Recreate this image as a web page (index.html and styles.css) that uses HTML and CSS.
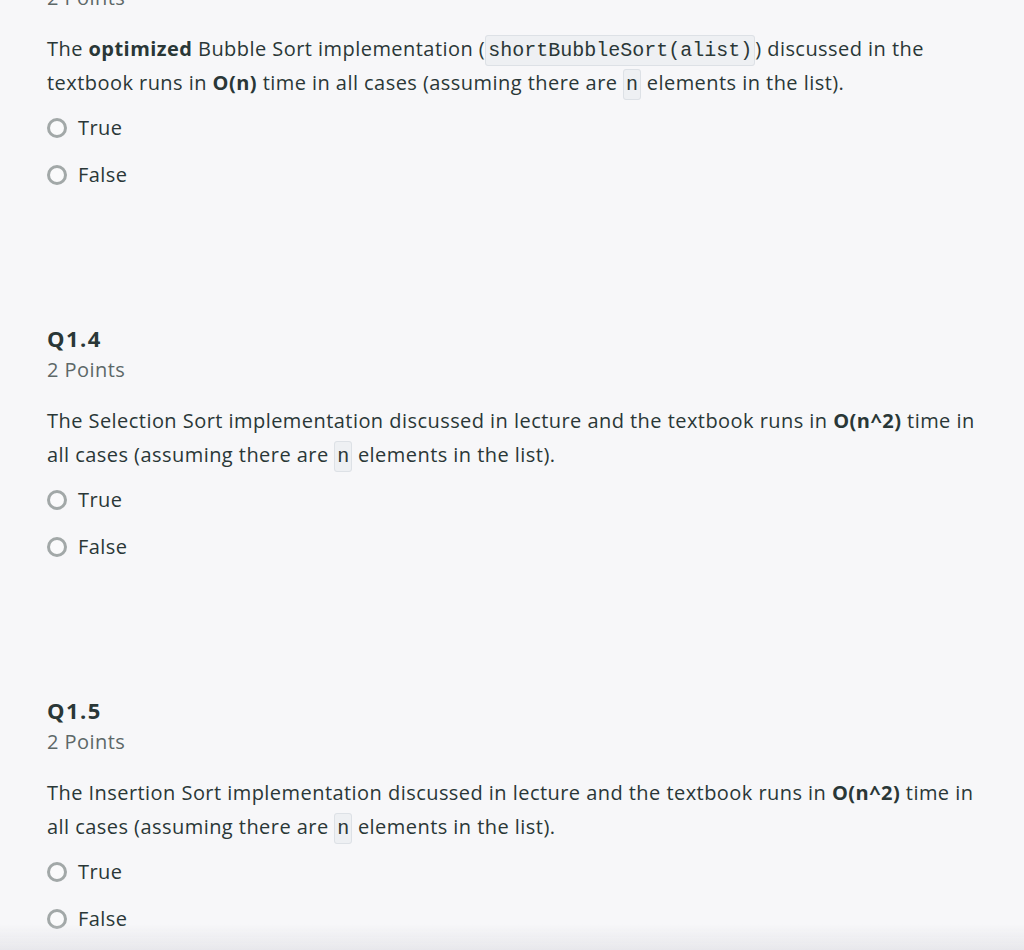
FILE: index.html
```html
<!DOCTYPE html>
<html lang="en">
<head>
<meta charset="utf-8">
<title>Questions</title>
<link rel="stylesheet" href="styles.css">
</head>
<body>
<main class="page">
  <section class="question first">
    <div class="points">2 Points</div>
    <p class="prompt">The <strong>optimized</strong> Bubble Sort implementation (<code>shortBubbleSort(alist)</code>) discussed in the textbook runs in <strong>O(n)</strong> time in all cases (assuming there are <code>n</code> elements in the list).</p>
    <ul class="options">
      <li class="option"><span class="radio"></span><span>True</span></li>
      <li class="option"><span class="radio"></span><span>False</span></li>
    </ul>
  </section>
  <section class="question">
    <h3 class="title">Q1.4</h3>
    <div class="points">2 Points</div>
    <p class="prompt">The Selection Sort implementation discussed in lecture and the textbook runs in <strong>O(n^2)</strong> time in all cases (assuming there are <code>n</code> elements in the list).</p>
    <ul class="options">
      <li class="option"><span class="radio"></span><span>True</span></li>
      <li class="option"><span class="radio"></span><span>False</span></li>
    </ul>
  </section>
  <section class="question">
    <h3 class="title">Q1.5</h3>
    <div class="points">2 Points</div>
    <p class="prompt">The Insertion Sort implementation discussed in lecture and the textbook runs in <strong>O(n^2)</strong> time in all cases (assuming there are <code>n</code> elements in the list).</p>
    <ul class="options">
      <li class="option"><span class="radio"></span><span>True</span></li>
      <li class="option"><span class="radio"></span><span>False</span></li>
    </ul>
  </section>
</main>
<div class="bottom-shade"></div>
</body>
</html>
```
FILE: styles.css
```css
html, body {
  margin: 0;
  padding: 0;
  background: #f7f7f9;
  overflow: hidden;
}
body {
  font-family: "Open Sans", Lato, sans-serif;
  color: #2a3737;
  height: 950px;
  letter-spacing: 0.45px;
}
.page {
  padding: 0 32px 0 47px;
  display: flex;
  flex-direction: column;
  gap: 124px;
}
.question.first {
  margin-top: -18px;
}
.title {
  margin: 0;
  font-size: 22px;
  line-height: 32px;
  font-weight: 700;
  letter-spacing: 1.5px;
}
.points {
  font-size: 20px;
  line-height: 32px;
  color: #5d6868;
}
.prompt {
  margin: 18px 0 0;
  font-size: 20px;
  line-height: 34px;
}
.prompt strong {
  font-weight: 700;
}
code {
  font-family: "Liberation Mono", "Courier New", monospace;
  font-size: 20px;
  letter-spacing: 0;
  line-height: 1;
  background: #eef0f3;
  border: 1px solid #dde1e6;
  border-radius: 3px;
  padding: 3px 2px;
}
.options {
  list-style: none;
  margin: 4px 0 0;
  padding: 0;
}
.option {
  height: 47px;
  display: flex;
  align-items: center;
  gap: 11px;
  font-size: 20px;
}
.radio {
  width: 20px;
  height: 20px;
  box-sizing: border-box;
  border: 3px solid #a2a8a8;
  border-radius: 50%;
  background: #fafafb;
}
.bottom-shade {
  position: fixed;
  left: 0;
  right: 0;
  bottom: 0;
  height: 26px;
  background: linear-gradient(to bottom, rgba(230,230,234,0), rgba(230,230,234,0.9));
  pointer-events: none;
}
```
